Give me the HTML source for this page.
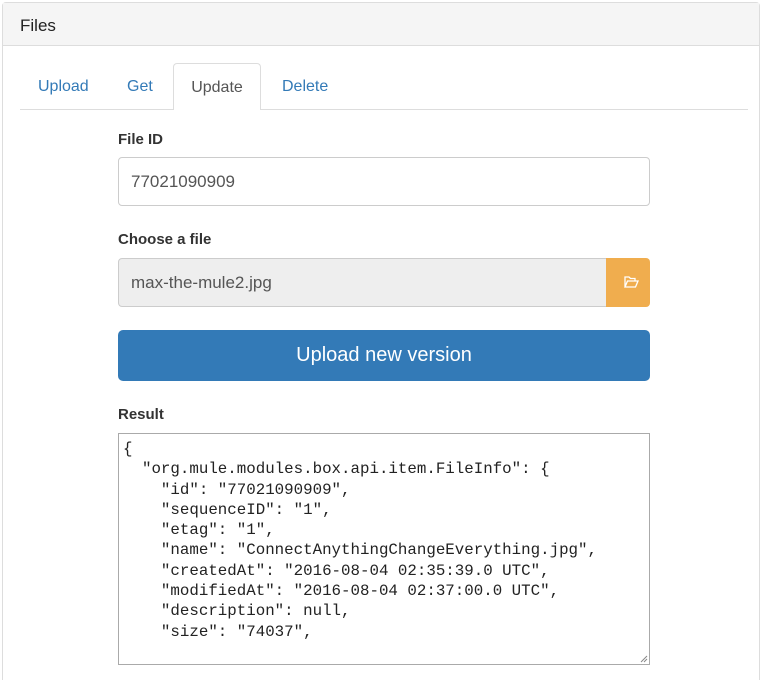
<!DOCTYPE html>
<html><head><style>
html,body{margin:0;height:680px;overflow:hidden}
body{background:#fff;font-family:"Liberation Sans",sans-serif;color:#333;width:768px;position:relative}
.panel{position:absolute;left:2px;top:2px;width:758px;height:678px;border:1px solid #ddd;border-bottom:none;border-radius:4px 4px 0 0;box-sizing:border-box}
.hd{height:43px;background:#f5f5f5;border-bottom:1px solid #ddd;font-size:17px;line-height:45px;padding-left:17px;color:#222;box-sizing:border-box}
.tabs{position:absolute;left:20px;top:109px;width:728px;border-top:1px solid #ddd}
.t{position:absolute;top:78px;font-size:16px;color:#337ab7}
.act{position:absolute;left:173px;top:63px;width:88px;height:47px;border:1px solid #ddd;border-bottom:none;border-radius:4px 4px 0 0;background:#fff;box-sizing:border-box;text-align:center;line-height:47px;font-size:16px;color:#555}
.lbl{position:absolute;left:118px;font-weight:bold;font-size:15px}
.inp{position:absolute;left:118px;width:532px;box-sizing:border-box;border:1px solid #ccc;border-radius:4px;font-size:17px;padding-left:12px;color:#555}
.btn{position:absolute;left:118px;top:330px;width:532px;height:51px;background:#337ab7;border-radius:5px;color:#fff;font-size:20px;text-align:center;line-height:51px}
pre{position:absolute;left:118px;top:433px;width:532px;height:232px;box-sizing:border-box;border:1px solid #aaa;margin:0;padding:5px 0 0 4px;font-family:"Liberation Mono",monospace;font-size:15.8px;line-height:20.3px;color:#222;overflow:hidden}
</style></head><body>
<div class="panel"><div class="hd">Files</div></div>
<div class="tabs"></div>
<div class="t" style="left:38px">Upload</div>
<div class="t" style="left:127px">Get</div>
<div class="act">Update</div>
<div class="t" style="left:282px">Delete</div>
<div class="lbl" style="top:131px">File ID</div>
<div class="inp" style="top:157px;height:49px;line-height:47px">77021090909</div>
<div class="lbl" style="top:231px">Choose a file</div>
<div class="inp" style="top:258px;height:49px;line-height:47px;background:#eee;border-radius:4px 0 0 4px;width:490px">max-the-mule2.jpg</div>
<div style="position:absolute;left:606px;top:258px;width:44px;height:49px;background:#f0ad4e;border-radius:0 4px 4px 0">
<svg width="44" height="49" viewBox="0 0 44 49"><path d="M19 29V19h4l1.5 1.5H29v2.5 M19 29l2.5-6H32l-2.5 6Z" fill="none" stroke="#fff" stroke-width="1.3"/></svg></div>
<div class="btn">Upload new version</div>
<div class="lbl" style="top:406px">Result</div>
<pre>{
  "org.mule.modules.box.api.item.FileInfo": {
    "id": "77021090909",
    "sequenceID": "1",
    "etag": "1",
    "name": "ConnectAnythingChangeEverything.jpg",
    "createdAt": "2016-08-04 02:35:39.0 UTC",
    "modifiedAt": "2016-08-04 02:37:00.0 UTC",
    "description": null,
    "size": "74037",
</pre>
<svg style="position:absolute;left:640px;top:655px" width="8" height="8"><path d="M1 7L7 1M4 7L7 4" stroke="#888" stroke-width="1"/></svg>
</body></html>
